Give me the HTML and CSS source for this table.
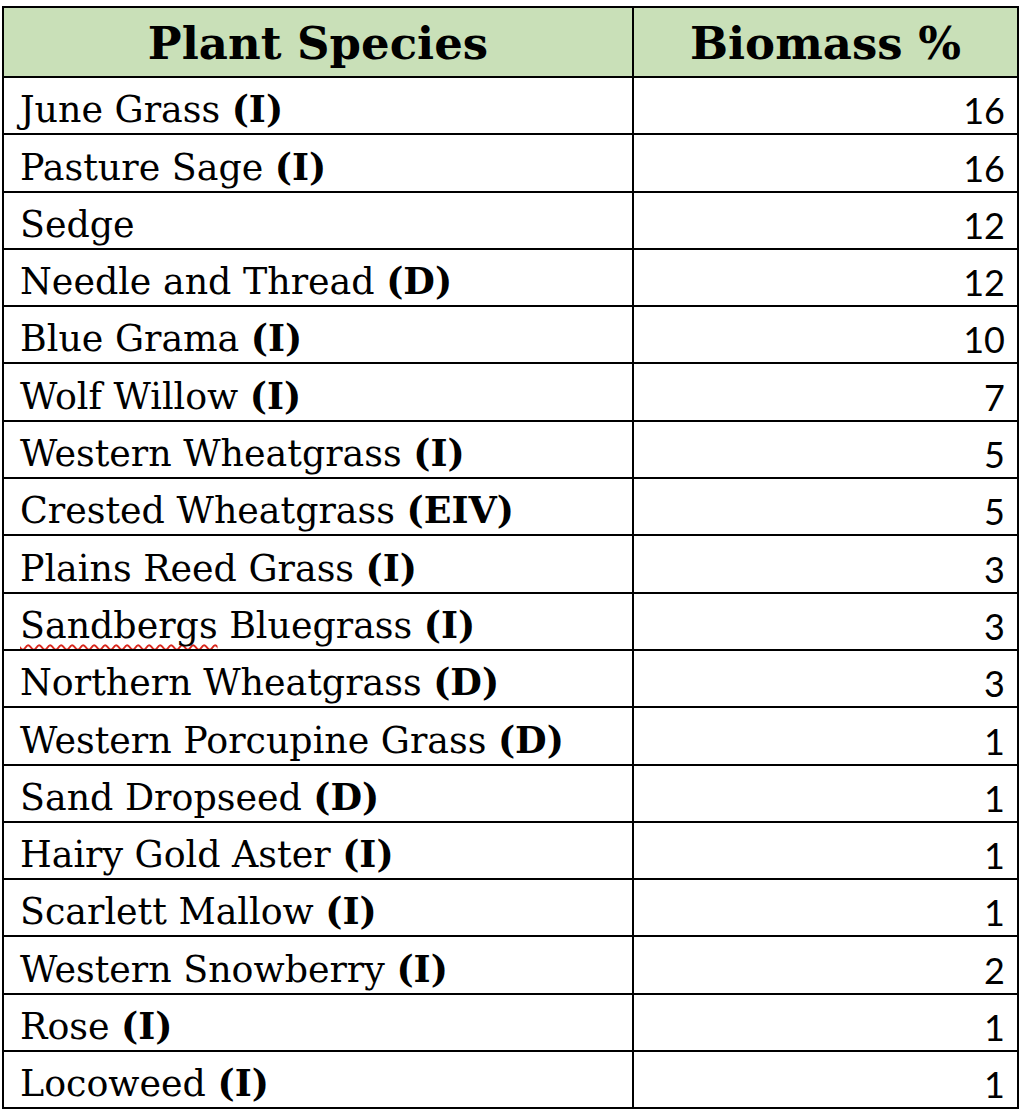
FILE: index.html
```html
<!DOCTYPE html>
<html lang="en">
<head>
<meta charset="utf-8">
<title>Plant Species Biomass</title>
<link rel="stylesheet" href="styles.css">
</head>
<body>
<table class="biomass">
  <colgroup>
    <col class="col-name">
    <col class="col-value">
  </colgroup>
  <thead>
    <tr>
      <th>Plant Species</th>
      <th>Biomass %</th>
    </tr>
  </thead>
  <tbody>
    <tr><td class="name">June Grass <b>(I)</b></td><td class="num">16</td></tr>
    <tr><td class="name">Pasture Sage <b>(I)</b></td><td class="num">16</td></tr>
    <tr><td class="name">Sedge</td><td class="num">12</td></tr>
    <tr><td class="name">Needle and Thread <b>(D)</b></td><td class="num">12</td></tr>
    <tr><td class="name">Blue Grama <b>(I)</b></td><td class="num">10</td></tr>
    <tr><td class="name">Wolf Willow <b>(I)</b></td><td class="num">7</td></tr>
    <tr><td class="name">Western Wheatgrass <b>(I)</b></td><td class="num">5</td></tr>
    <tr><td class="name">Crested Wheatgrass <b>(EIV)</b></td><td class="num">5</td></tr>
    <tr><td class="name">Plains Reed Grass <b>(I)</b></td><td class="num">3</td></tr>
    <tr><td class="name"><span class="spell">Sandbergs</span> Bluegrass <b>(I)</b></td><td class="num">3</td></tr>
    <tr><td class="name">Northern Wheatgrass <b>(D)</b></td><td class="num">3</td></tr>
    <tr><td class="name">Western Porcupine Grass <b>(D)</b></td><td class="num">1</td></tr>
    <tr><td class="name">Sand Dropseed <b>(D)</b></td><td class="num">1</td></tr>
    <tr><td class="name">Hairy Gold Aster <b>(I)</b></td><td class="num">1</td></tr>
    <tr><td class="name">Scarlett Mallow <b>(I)</b></td><td class="num">1</td></tr>
    <tr><td class="name">Western Snowberry <b>(I)</b></td><td class="num">2</td></tr>
    <tr><td class="name">Rose <b>(I)</b></td><td class="num">1</td></tr>
    <tr><td class="name">Locoweed <b>(I)</b></td><td class="num">1</td></tr>
  </tbody>
</table>
</body>
</html>
```
FILE: styles.css
```css
html, body {
  margin: 0;
  padding: 0;
  background: #ffffff;
}

body {
  padding: 6px 0 0 2px;
}

.biomass {
  border-collapse: separate;
  border-spacing: 0;
  table-layout: fixed;
  width: 1015px;
  border-top: 2px solid #000;
  border-left: 2px solid #000;
  color: #000;
}

.col-name {
  width: 630px;
}

.col-value {
  width: 385px;
}

.biomass th,
.biomass td {
  box-sizing: border-box;
  border-right: 2px solid #000;
  border-bottom: 2px solid #000;
  padding: 0;
  white-space: nowrap;
  overflow: hidden;
}

.biomass th {
  height: 70px;
  background: #c9e0b8;
  font-family: "DejaVu Serif", "Liberation Serif", serif;
  font-weight: bold;
  font-size: 45px;
  line-height: 50px;
  text-align: center;
  vertical-align: middle;
  padding-top: 4px;
}

.biomass td {
  height: 57.3px;
  vertical-align: bottom;
  line-height: 38px;
  padding-bottom: 4px;
}

.name {
  font-family: "DejaVu Serif", "Liberation Serif", serif;
  font-size: 36.4px;
  padding-left: 16px !important;
}

.name b {
  font-weight: bold;
}

.num {
  font-family: Lato, "Open Sans", sans-serif;
  font-size: 36px;
  text-align: right;
  padding-right: 12px !important;
}

.spell {
  text-decoration: underline wavy #d9261c;
  text-decoration-thickness: 1.5px;
  text-decoration-skip-ink: none;
  text-underline-offset: 6px;
}
```
